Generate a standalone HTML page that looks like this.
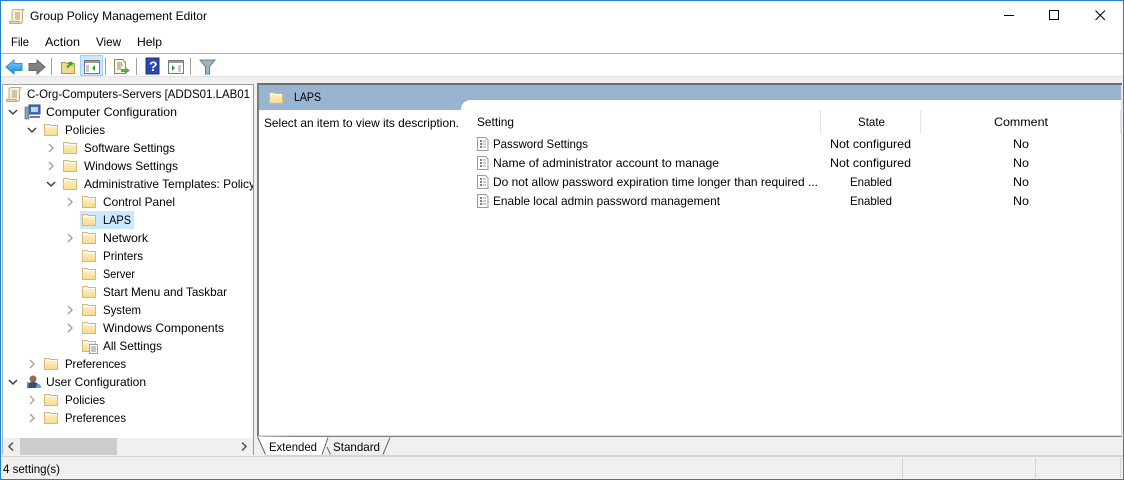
<!DOCTYPE html>
<html><head><meta charset="utf-8"><title>Group Policy Management Editor</title>
<style>
html,body{margin:0;padding:0;background:#fff;width:1124px;height:480px;overflow:hidden}
svg{display:block}
text{font-family:"Liberation Sans",sans-serif;font-size:12px;fill:#000}
</style></head><body>
<svg width="1124" height="480" viewBox="0 0 1124 480" xmlns="http://www.w3.org/2000/svg">
<defs>
<linearGradient id="fg" x1="0" y1="0" x2="0" y2="1"><stop offset="0" stop-color="#fff3c8"/><stop offset="1" stop-color="#f8dc8c"/></linearGradient>
<linearGradient id="ar" x1="0" y1="0" x2="0" y2="1"><stop offset="0" stop-color="#7fd0fa"/><stop offset="1" stop-color="#1a86d8"/></linearGradient>
<g id="folder"><path d="M0.5 12.5V1.500h5l1 1h7v10z" fill="url(#fg)" stroke="#d4b97c"/><rect x="1" y="3" width="12" height="1" fill="#fff"/><rect x="9" y="2" width="4" height="1" fill="#8fc0e0"/></g>
<path id="r" d="M-2-4l4 4-4 4" fill="none" stroke="#a6a6a6" stroke-width="1.500"/>
<path id="d" d="M-4-2l4 4 4-4" fill="none" stroke="#404040" stroke-width="1.500"/>
<g id="doc"><path d="M0.500 1.500h8l2.500 2.500v10.500H0.500z" fill="#fff" stroke="#9a9a9a"/><path d="M3 5h2M3 8h2M3 11h2" stroke="#333" stroke-width="1.200"/><path d="M6 5h3M6 8h3M6 11h3" stroke="#9a9a9a"/></g>
<g id="scroll"><path d="M5 1.500h10.500c-1.500.5-2 1.500-2 2.500v9c0 1.500-1 2.500-2.500 2.500H2c-1.500 0-2-1-1.500-2H3V3.500c0-1 .8-2 2-2z" fill="#f8f0d0" stroke="#bcae84"/><path d="M.5 13.500H10c-.3 1 0 1.500 1 2H2c-1 0-1.800-.8-1.500-2z" fill="#e6d8a8" stroke="#bcae84"/><path d="M6 5h5M6 7h5M6 9h5M6 11h5" stroke="#a89c78"/></g>
</defs>

<!-- window -->
<rect width="1124" height="480" fill="#1f80d0"/>
<rect x="1" y="1" width="1122" height="478" fill="#fff"/>

<!-- title -->
<use href="#scroll" x="9" y="8"/>
<text x="30" y="20" textLength="177" lengthAdjust="spacingAndGlyphs">Group Policy Management Editor</text>
<rect x="1004" y="15" width="10" height="1" fill="#000"/>
<rect x="1049.500" y="10.500" width="9" height="9" fill="none" stroke="#000"/>
<path d="M1095.500 10.500l9.500 9.500M1105 10.500l-9.500 9.500" stroke="#000" fill="none"/>

<!-- menu -->
<text x="11" y="46" textLength="18" lengthAdjust="spacingAndGlyphs">File</text>
<text x="45" y="46" textLength="35" lengthAdjust="spacingAndGlyphs">Action</text>
<text x="96" y="46" textLength="25" lengthAdjust="spacingAndGlyphs">View</text>
<text x="137" y="46" textLength="25" lengthAdjust="spacingAndGlyphs">Help</text>
<rect x="1" y="53" width="1122" height="1" fill="#b0b0bc"/>

<!-- toolbar -->
<path d="M6 67l8-7v3.500h8v7h-8V74z" fill="url(#ar)" stroke="#3a8cd0"/>
<path d="M45 67l-8-7v3.500h-8v7h8V74z" fill="#808080" stroke="#6a6a6a"/>
<rect x="51" y="58" width="1" height="17" fill="#a0a0a0"/>
<path d="M61.500 73.500v-11h4l1 1h8v10z" fill="#f0d88c" stroke="#b8964c"/>
<path d="M66 67l3-3-1.500-1.500 5-1v5L71 65l-3 3z" fill="#3d9c35"/>
<rect x="80.500" y="55.500" width="22" height="20" fill="#cce8ff" stroke="#99d1ff"/>
<rect x="84.500" y="60.500" width="15" height="13" fill="#fff" stroke="#777"/>
<rect x="85" y="61" width="14" height="2" fill="#9a9a9a"/>
<rect x="86" y="65" width="3" height="7" fill="#c8c8c8"/>
<path d="M95 65v6l-3-3z" fill="#2f9a2f"/>
<rect x="105" y="58" width="1" height="17" fill="#a0a0a0"/>
<path d="M114.500 59.500h8l3 3v11h-11z" fill="#fbf6dc" stroke="#8a8a70"/>
<path d="M117 63h5M117 65h6M117 67h4M117 69h4" stroke="#8a8a70"/>
<path d="M121 69h4v-2l5 3.500-5 3.500v-2h-4z" fill="#4fae3c"/>
<rect x="136" y="58" width="1" height="17" fill="#a0a0a0"/>
<rect x="146" y="58" width="13" height="16" fill="#2a48a8" stroke="#1e3580"/>
<text x="149" y="71" style="font-size:14px;font-weight:bold;fill:#fff">?</text>
<rect x="168.500" y="60.500" width="15" height="13" fill="#fff" stroke="#777"/>
<rect x="169" y="61" width="14" height="2" fill="#9a9a9a"/>
<path d="M172 65v6l3-3z" fill="#2f9a2f"/>
<rect x="178" y="65" width="3" height="7" fill="#c8c8c8"/>
<rect x="190" y="58" width="1" height="17" fill="#a0a0a0"/>
<path d="M200 60h15l-5.500 6.500V74h-4v-7.500z" fill="#9cb4c4" stroke="#64808f"/>

<!-- band -->
<rect x="1" y="76" width="1122" height="8" fill="#f0f0f0"/>
<rect x="1" y="76" width="1122" height="1" fill="#e2e2e2"/>

<!-- tree pane -->
<rect x="1" y="84" width="256" height="372" fill="#f0f0f0"/>
<rect x="2" y="84" width="252" height="371" fill="#fff"/>
<rect x="2" y="84" width="252" height="1" fill="#a0a0a0"/>
<rect x="253" y="84" width="1" height="371" fill="#9a9a9a"/>
<rect x="2" y="84" width="1" height="371" fill="#b0b0b0"/>
<rect x="80" y="211" width="54" height="18" fill="#cce8ff"/>
<svg x="3" y="85" width="250" height="352" viewBox="3 85 250 352">
<use href="#scroll" x="6" y="86"/>
<text x="27" y="98" textLength="223" lengthAdjust="spacingAndGlyphs">C-Org-Computers-Servers [ADDS01.LAB01</text>

<use href="#d" x="13" y="112"/>
<rect x="29" y="105" width="11" height="9" fill="#3a70c8" stroke="#3c4a70"/><rect x="31" y="107" width="7" height="5" fill="#bcd8f8"/><rect x="25" y="107" width="4" height="12" fill="#8ca0b4" stroke="#506070" stroke-width=".6"/><path d="M30 117h10" stroke="#6a7a90" stroke-width="2"/>
<text x="46" y="116" textLength="131" lengthAdjust="spacingAndGlyphs">Computer Configuration</text>

<use href="#d" x="32" y="130"/><use href="#folder" x="44" y="123"/>
<text x="65" y="134" textLength="40" lengthAdjust="spacingAndGlyphs">Policies</text>

<use href="#r" x="51" y="148"/><use href="#folder" x="63" y="141"/>
<text x="84" y="152" textLength="91" lengthAdjust="spacingAndGlyphs">Software Settings</text>
<use href="#r" x="51" y="166"/><use href="#folder" x="63" y="159"/>
<text x="84" y="170" textLength="94" lengthAdjust="spacingAndGlyphs">Windows Settings</text>
<use href="#d" x="51" y="184"/><use href="#folder" x="63" y="177"/>
<text x="84" y="188" textLength="171" lengthAdjust="spacingAndGlyphs">Administrative Templates: Policy</text>

<use href="#r" x="70" y="202"/><use href="#folder" x="82" y="195"/>
<text x="103" y="206" textLength="72" lengthAdjust="spacingAndGlyphs">Control Panel</text>
<use href="#folder" x="82" y="213"/>
<text x="103" y="224" textLength="28" lengthAdjust="spacingAndGlyphs">LAPS</text>
<use href="#r" x="70" y="238"/><use href="#folder" x="82" y="231"/>
<text x="103" y="242" textLength="45" lengthAdjust="spacingAndGlyphs">Network</text>
<use href="#folder" x="82" y="249"/>
<text x="103" y="260" textLength="40" lengthAdjust="spacingAndGlyphs">Printers</text>
<use href="#folder" x="82" y="267"/>
<text x="103" y="278" textLength="32" lengthAdjust="spacingAndGlyphs">Server</text>
<use href="#folder" x="82" y="285"/>
<text x="103" y="296" textLength="124" lengthAdjust="spacingAndGlyphs">Start Menu and Taskbar</text>
<use href="#r" x="70" y="310"/><use href="#folder" x="82" y="303"/>
<text x="103" y="314" textLength="38" lengthAdjust="spacingAndGlyphs">System</text>
<use href="#r" x="70" y="328"/><use href="#folder" x="82" y="321"/>
<text x="103" y="332" textLength="121" lengthAdjust="spacingAndGlyphs">Windows Components</text>
<use href="#folder" x="82" y="339"/>
<rect x="89.500" y="344.500" width="8" height="9" fill="#fff" stroke="#a0a0a0"/><path d="M91 347h5M91 349h5M91 351h5" stroke="#888"/>
<text x="103" y="350" textLength="59" lengthAdjust="spacingAndGlyphs">All Settings</text>

<use href="#r" x="32" y="364"/><use href="#folder" x="44" y="357"/>
<text x="65" y="368" textLength="61" lengthAdjust="spacingAndGlyphs">Preferences</text>

<use href="#d" x="13" y="382"/>
<circle cx="33" cy="379" r="3.500" fill="#9a6a48"/><path d="M27 388c0-5 3-6 6-6s6 1 6 6z" fill="#3e4e64"/><path d="M36 388c0-3 1-4 2.500-4s2.500 1 2.500 4z" fill="#6aa0d8"/><path d="M28 382v6" stroke="#3a80c0" stroke-width="1.500"/>
<text x="46" y="386" textLength="100" lengthAdjust="spacingAndGlyphs">User Configuration</text>

<use href="#r" x="32" y="400"/><use href="#folder" x="44" y="393"/>
<text x="65" y="404" textLength="40" lengthAdjust="spacingAndGlyphs">Policies</text>
<use href="#r" x="32" y="418"/><use href="#folder" x="44" y="411"/>
<text x="65" y="422" textLength="61" lengthAdjust="spacingAndGlyphs">Preferences</text>
</svg>

<!-- tree scrollbar -->
<rect x="3" y="438" width="250" height="17" fill="#f0f0f0"/>
<rect x="20" y="438" width="97" height="17" fill="#cdcdcd"/>
<path d="M13 442.500l-4 4 4 4" fill="none" stroke="#505050" stroke-width="1.500"/>
<path d="M242 442.500l4 4-4 4" fill="none" stroke="#505050" stroke-width="1.500"/>

<!-- splitter + right pane -->
<rect x="254" y="84" width="3" height="372" fill="#f0f0f0"/>
<rect x="257" y="84" width="864" height="351" fill="#fff"/>
<rect x="257" y="83" width="865" height="2" fill="#6e6e6e"/>
<rect x="257" y="84" width="2" height="353" fill="#7a7a7a"/>
<rect x="259" y="435" width="863" height="1" fill="#dcdcdc"/>
<rect x="1121" y="85" width="1" height="351" fill="#dcdcdc"/>
<rect x="1122" y="84" width="1" height="372" fill="#f0f0f0"/>
<rect x="259" y="85" width="862" height="15" fill="#98b4d0"/>
<path d="M259 100H461v10H259z" fill="#98b4d0"/>
<path d="M461 110c0-6 4-10 10-10h-10z" fill="#98b4d0"/>
<use href="#folder" transform="translate(269 91)"/>
<text x="294" y="101" textLength="27" lengthAdjust="spacingAndGlyphs">LAPS</text>
<text x="264" y="127" textLength="195" lengthAdjust="spacingAndGlyphs">Select an item to view its description.</text>

<text x="477" y="126" textLength="37" lengthAdjust="spacingAndGlyphs">Setting</text>
<text x="858" y="126" textLength="27" lengthAdjust="spacingAndGlyphs">State</text>
<text x="994" y="126" textLength="54" lengthAdjust="spacingAndGlyphs">Comment</text>
<rect x="820" y="110" width="1" height="24" fill="#e4e4e4"/>
<rect x="920" y="110" width="1" height="24" fill="#e4e4e4"/>
<rect x="1120" y="110" width="1" height="24" fill="#e4e4e4"/>

<use href="#doc" x="477" y="136"/>
<text x="493" y="148" textLength="95" lengthAdjust="spacingAndGlyphs">Password Settings</text>
<text x="830" y="148" textLength="81" lengthAdjust="spacingAndGlyphs">Not configured</text>
<text x="1013" y="148" textLength="16" lengthAdjust="spacingAndGlyphs">No</text>
<use href="#doc" x="477" y="155"/>
<text x="493" y="167" textLength="226" lengthAdjust="spacingAndGlyphs">Name of administrator account to manage</text>
<text x="830" y="167" textLength="81" lengthAdjust="spacingAndGlyphs">Not configured</text>
<text x="1013" y="167" textLength="16" lengthAdjust="spacingAndGlyphs">No</text>
<use href="#doc" x="477" y="174"/>
<text x="493" y="186" textLength="325" lengthAdjust="spacingAndGlyphs">Do not allow password expiration time longer than required ...</text>
<text x="850" y="186" textLength="42" lengthAdjust="spacingAndGlyphs">Enabled</text>
<text x="1013" y="186" textLength="16" lengthAdjust="spacingAndGlyphs">No</text>
<use href="#doc" x="477" y="193"/>
<text x="493" y="205" textLength="227" lengthAdjust="spacingAndGlyphs">Enable local admin password management</text>
<text x="850" y="205" textLength="42" lengthAdjust="spacingAndGlyphs">Enabled</text>
<text x="1013" y="205" textLength="16" lengthAdjust="spacingAndGlyphs">No</text>

<!-- tabs -->
<rect x="257" y="436" width="866" height="20" fill="#f0f0f0"/>
<rect x="259" y="436" width="863" height="1" fill="#808080"/>
<path d="M257.500 436.500l8 18H322l6-17z" fill="#fff"/>
<path d="M257.500 436.500l8 18" fill="none" stroke="#666"/>
<path d="M322 454.500l6-17" fill="none" stroke="#666"/>
<path d="M327 447l3.500 7.500" fill="none" stroke="#666"/>
<path d="M383 454.500l7-17" fill="none" stroke="#666"/>
<path d="M265.500 455.500H1123" fill="none" stroke="#d4d4d4"/>
<text x="269" y="451" textLength="48" lengthAdjust="spacingAndGlyphs">Extended</text>
<text x="333" y="451" textLength="47" lengthAdjust="spacingAndGlyphs">Standard</text>

<!-- status -->
<rect x="1" y="456" width="1122" height="23" fill="#f0f0f0"/>
<rect x="1" y="456" width="1122" height="1" fill="#d4d4d4"/>
<rect x="902" y="458" width="1" height="20" fill="#d4d4d4"/>
<rect x="1035" y="458" width="1" height="20" fill="#d4d4d4"/>
<rect x="1120" y="458" width="1" height="20" fill="#d4d4d4"/>
<text x="3" y="473" textLength="57" lengthAdjust="spacingAndGlyphs">4 setting(s)</text>
</svg>
</body></html>
